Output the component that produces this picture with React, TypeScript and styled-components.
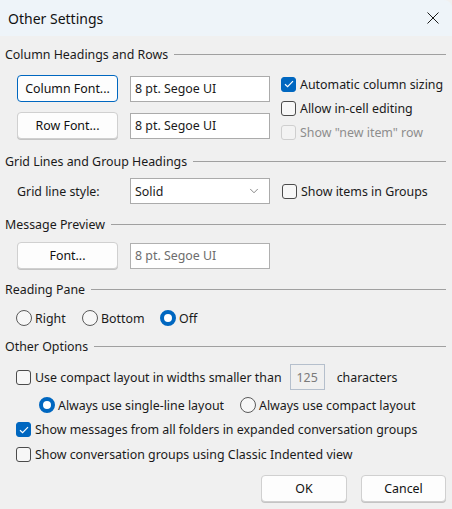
import React from 'react';
import styled, { createGlobalStyle } from 'styled-components';
import { ChevronDown } from 'lucide-react';

const GlobalStyle = createGlobalStyle`
	html, body {
		margin: 0;
		padding: 0;
		background: #f0f0f0;
	}
	* {
		box-sizing: border-box;
	}
`;

const Window = styled.div`
	width: 452px;
	height: 509px;
	display: flex;
	flex-direction: column;
	background: #f0f0f0;
	font-family: "Segoe UI", "Noto Sans", sans-serif;
	font-size: 12.4px;
	color: #1a1a1a;
	overflow: hidden;
`;

const TitleBar = styled.div`
	height: 36px;
	display: flex;
	align-items: center;
	justify-content: space-between;
	padding: 0 13px 0 8px;
	background: #eef4f9;
	border-top-right-radius: 8px;
`;

const Title = styled.div`
	font-size: 14px;
	color: #111;
`;

const CloseButton = styled.button`
	width: 12px;
	height: 12px;
	padding: 0;
	border: none;
	background: none;
	display: flex;
	align-items: center;
	justify-content: center;
`;

const Body = styled.div`
	flex: 1;
	display: flex;
	flex-direction: column;
	padding: 11px 6px 7px 5px;
`;

const Legend = styled.div<{ top?: number }>`
	display: flex;
	align-items: center;
	gap: 6px;
	height: 16px;
	line-height: 16px;
	margin-top: ${(props) => props.top || 0}px;
	&::after {
		content: '';
		flex: 1;
		height: 1px;
		margin-top: -1px;
		background: #a0a0a0;
	}
`;

const Group = styled.div<{ top: number, indent?: number }>`
	margin-top: ${(props) => props.top}px;
	padding-left: ${(props) => props.indent || 12}px;
`;

const SplitRow = styled.div`
	display: flex;
	align-items: flex-start;
`;

const Column = styled.div<{ gap: number }>`
	display: flex;
	flex-direction: column;
	gap: ${(props) => props.gap}px;
	padding-top: 4px;
`;

const FieldRow = styled.div`
	display: flex;
	align-items: center;
	gap: 12px;
`;

const Button = styled.button<{ primary?: boolean, width?: number }>`
	width: ${(props) => props.width || 101}px;
	height: 27px;
	padding: 0;
	font: inherit;
	color: #111;
	background: #fdfdfd;
	border: 1px solid ${(props) => props.primary ? '#0067c0' : '#d0d0d0'};
	border-radius: 4px;
	box-shadow: ${(props) => props.primary ? 'none' : '0 1px 0 #c4c4c4'};
`;

const TextField = styled.div<{ disabled?: boolean }>`
	width: 140px;
	height: 26px;
	display: flex;
	align-items: center;
	padding-left: 4px;
	background: #fff;
	border: 1px solid ${(props) => props.disabled ? '#b0b0b0' : '#ababab'};
	color: ${(props) => props.disabled ? '#6d6d6d' : '#1a1a1a'};
`;

const Select = styled(TextField)`
	justify-content: space-between;
	padding-right: 8px;
`;

const Options = styled.div`
	display: flex;
	flex-direction: column;
	margin-left: 11px;
	padding-top: 1px;
`;

const OptionRow = styled.label<{ disabled?: boolean, height?: number }>`
	height: ${(props) => props.height || 24}px;
	display: flex;
	align-items: center;
	gap: 4px;
	color: ${(props) => props.disabled ? '#8d8d8d' : 'inherit'};
	white-space: nowrap;
`;

const Box = styled.span<{ checked?: boolean, disabled?: boolean }>`
	width: 15px;
	height: 15px;
	flex: none;
	display: flex;
	align-items: center;
	justify-content: center;
	border-radius: 3px;
	border: 1px solid ${(props) => props.checked ? '#0067c0' : props.disabled ? '#cfcfcf' : '#4b4b4b'};
	background: ${(props) => props.checked ? '#0067c0' : props.disabled ? '#f3f3f3' : '#f7f7f7'};
`;

const Radio = styled.span<{ checked?: boolean }>`
	width: 16px;
	height: 16px;
	flex: none;
	border-radius: 50%;
	border: ${(props) => props.checked ? '4.5px solid #0067c0' : '1px solid #5a5a5a'};
	background: ${(props) => props.checked ? '#fff' : '#f7f7f7'};
`;

const RadioGroup = styled.div<{ indent: number, top?: number }>`
	display: flex;
	align-items: center;
	margin-left: ${(props) => props.indent}px;
	margin-top: ${(props) => props.top || 0}px;
`;

const RadioRow = styled(OptionRow)<{ width?: number }>`
	width: ${(props) => props.width ? props.width + 'px' : 'auto'};
	gap: 3px;
`;

const Label = styled.span<{ width?: number }>`
	width: ${(props) => props.width ? props.width + 'px' : 'auto'};
`;

const SpinField = styled.span`
	width: 35px;
	height: 26px;
	margin: 0 8px 0 4px;
	display: flex;
	align-items: center;
	justify-content: center;
	border: 1px solid #b5bfcc;
	color: #7a7a7a;
	background: #f0f0f0;
`;

const Footer = styled.div`
	margin-top: auto;
	display: flex;
	justify-content: flex-end;
	gap: 14px;
`;

const Check = () => (
	<svg width="10" height="8" viewBox="0 0 10 8">
		<path d="M1 4.2 L3.6 6.6 L9 1.2" fill="none" stroke="#fff" strokeWidth="1.2" />
	</svg>
);

const Checkbox = ({ checked, disabled, children, height }: { checked?: boolean, disabled?: boolean, children: React.ReactNode, height?: number }) => (
	<OptionRow disabled={disabled} height={height}>
		<Box checked={checked} disabled={disabled}>{checked && <Check />}</Box>
		{children}
	</OptionRow>
);

const RadioOption = ({ checked, width, children }: { checked?: boolean, width?: number, children: React.ReactNode }) => (
	<RadioRow width={width}>
		<Radio checked={checked} />
		<span>{children}</span>
	</RadioRow>
);

const App = () => {
	return <>
		<GlobalStyle />
		<Window>
			<TitleBar>
				<Title>Other Settings</Title>
				<CloseButton aria-label="Close">
					<svg width="12" height="12" viewBox="0 0 12 12">
						<path d="M0.5 0.5 L11.5 11.5 M11.5 0.5 L0.5 11.5" stroke="#1a1a1a" strokeWidth="1" />
					</svg>
				</CloseButton>
			</TitleBar>
			<Body>
				<Legend>Column Headings and Rows</Legend>
				<Group top={8}>
					<SplitRow>
						<Column gap={10}>
							<FieldRow>
								<Button primary>Column Font...</Button>
								<TextField>8 pt. Segoe UI</TextField>
							</FieldRow>
							<FieldRow>
								<Button>Row Font...</Button>
								<TextField>8 pt. Segoe UI</TextField>
							</FieldRow>
						</Column>
						<Options>
							<Checkbox checked>Automatic column sizing</Checkbox>
							<Checkbox>Allow in-cell editing</Checkbox>
							<Checkbox disabled>Show "new item" row</Checkbox>
						</Options>
					</SplitRow>
				</Group>

				<Legend top={10}>Grid Lines and Group Headings</Legend>
				<Group top={8}>
					<FieldRow>
						<Label width={101}>Grid line style:</Label>
						<Select>
							<span>Solid</span>
							<ChevronDown size={14} strokeWidth={1} color="#333" />
						</Select>
						<Checkbox height={26}>Show items in Groups</Checkbox>
					</FieldRow>
				</Group>

				<Legend top={13}>Message Preview</Legend>
				<Group top={9}>
					<FieldRow>
						<Button>Font...</Button>
						<TextField disabled>8 pt. Segoe UI</TextField>
					</FieldRow>
				</Group>

				<Legend top={13}>Reading Pane</Legend>
				<RadioGroup indent={11} top={8}>
					<RadioOption width={66}>Right</RadioOption>
					<RadioOption width={78}>Bottom</RadioOption>
					<RadioOption checked>Off</RadioOption>
				</RadioGroup>

				<Legend top={9}>Other Options</Legend>
				<Group top={7} indent={11}>
					<OptionRow height={30}>
						<Box />
						<span>Use compact layout in widths smaller than</span>
						<SpinField>125</SpinField>
						<span>characters</span>
					</OptionRow>
					<RadioGroup indent={23} top={1}>
						<RadioOption checked width={201}>Always use single-line layout</RadioOption>
						<RadioOption>Always use compact layout</RadioOption>
					</RadioGroup>
					<Checkbox checked height={25}>Show messages from all folders in expanded conversation groups</Checkbox>
					<Checkbox height={25}>Show conversation groups using Classic Indented view</Checkbox>
				</Group>

				<Footer>
					<Button width={86}>OK</Button>
					<Button width={85}>Cancel</Button>
				</Footer>
			</Body>
		</Window>
	</>;
};

export default App;
